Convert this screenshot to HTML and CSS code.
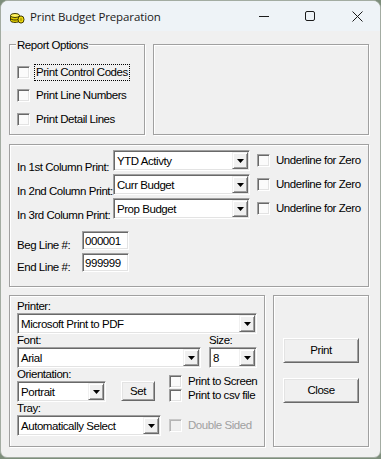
FILE: index.html
```html
<!DOCTYPE html>
<html>
<head>
<meta charset="utf-8">
<link rel="stylesheet" href="styles.css">
</head>
<body>
<div class="window">
  <div class="titlebar">
    <svg class="appicon" width="16" height="14" viewBox="0 0 16 14">
      <path d="M1.5 4.5 v5 c0 2.6 9 2.6 9 0 v-5" fill="#e2cf00" stroke="#3f3a00"/>
      <path d="M1.5 7.2 c0 2.4 9 2.4 9 0" fill="none" stroke="#3f3a00"/>
      <ellipse cx="6" cy="4.5" rx="4.5" ry="2" fill="#fff35c" stroke="#3f3a00"/>
      <ellipse cx="12" cy="8.5" rx="3" ry="3.6" fill="#f0dc10" stroke="#3f3a00"/>
      <ellipse cx="12" cy="8.5" rx="1.2" ry="1.8" fill="#b9a800"/>
    </svg>
    <span class="title">Print Budget Preparation</span>
    <div class="wctrls">
      <div class="wbtn"><span class="wmin"></span></div>
      <div class="wbtn"><span class="wmax"></span></div>
      <div class="wbtn">
        <svg width="11" height="11" viewBox="0 0 11 11"><path d="M0.5 0.5 L10.5 10.5 M10.5 0.5 L0.5 10.5" stroke="#1b1b1b" stroke-width="1"/></svg>
      </div>
    </div>
  </div>

  <div class="client">
    <div class="toprow">
      <div class="group g1">
        <div class="legend">Report Options</div>
        <div class="cbrow r1"><span class="cb"></span><span class="cbl focus">Print Control Codes</span></div>
        <div class="cbrow r2"><span class="cb"></span><span class="cbl">Print Line Numbers</span></div>
        <div class="cbrow r3"><span class="cb"></span><span class="cbl">Print Detail Lines</span></div>
      </div>
      <div class="group g2"></div>
    </div>

    <div class="group g3">
      <div class="colrow">
        <div class="rlbl">In 1st Column Print:</div>
        <div class="combo w-col"><span class="ctext">YTD Activty</span><span class="ddb"><svg width="7" height="4" viewBox="0 0 7 4"><path d="M0 0 H7 L3.5 4 Z" fill="#000"/></svg></span></div>
        <div class="uz"><span class="cb"></span><span class="uzl">Underline for Zero</span></div>
      </div>
      <div class="colrow">
        <div class="rlbl">In 2nd Column Print:</div>
        <div class="combo w-col"><span class="ctext">Curr Budget</span><span class="ddb"><svg width="7" height="4" viewBox="0 0 7 4"><path d="M0 0 H7 L3.5 4 Z" fill="#000"/></svg></span></div>
        <div class="uz"><span class="cb"></span><span class="uzl">Underline for Zero</span></div>
      </div>
      <div class="colrow">
        <div class="rlbl">In 3rd Column Print:</div>
        <div class="combo w-col"><span class="ctext">Prop Budget</span><span class="ddb"><svg width="7" height="4" viewBox="0 0 7 4"><path d="M0 0 H7 L3.5 4 Z" fill="#000"/></svg></span></div>
        <div class="uz"><span class="cb"></span><span class="uzl">Underline for Zero</span></div>
      </div>
      <div class="linerow first">
        <div class="llbl">Beg Line #:</div>
        <div class="inp">000001</div>
      </div>
      <div class="linerow">
        <div class="llbl">End Line #:</div>
        <div class="inp">999999</div>
      </div>
    </div>

    <div class="botrow">
      <div class="group g4">
        <div class="lbl">Printer:</div>
        <div class="combo w-printer"><span class="ctext">Microsoft Print to PDF</span><span class="ddb"><svg width="7" height="4" viewBox="0 0 7 4"><path d="M0 0 H7 L3.5 4 Z" fill="#000"/></svg></span></div>
        <div class="frow">
          <div class="fcol">
            <div class="lbl">Font:</div>
            <div class="combo w-font"><span class="ctext">Arial</span><span class="ddb"><svg width="7" height="4" viewBox="0 0 7 4"><path d="M0 0 H7 L3.5 4 Z" fill="#000"/></svg></span></div>
          </div>
          <div class="fcol">
            <div class="lbl">Size:</div>
            <div class="combo w-size"><span class="ctext">8</span><span class="ddb"><svg width="7" height="4" viewBox="0 0 7 4"><path d="M0 0 H7 L3.5 4 Z" fill="#000"/></svg></span></div>
          </div>
        </div>
        <div class="orow">
          <div class="fcol">
            <div class="lbl">Orientation:</div>
            <div class="combo w-orient"><span class="ctext">Portrait</span><span class="ddb"><svg width="7" height="4" viewBox="0 0 7 4"><path d="M0 0 H7 L3.5 4 Z" fill="#000"/></svg></span></div>
          </div>
          <div class="btn set">Set</div>
          <div class="checks">
            <div class="pcb"><span class="cb"></span><span class="pcl">Print to Screen</span></div>
            <div class="pcb"><span class="cb"></span><span class="pcl">Print to csv file</span></div>
          </div>
        </div>
        <div class="trow">
          <div class="fcol">
            <div class="lbl">Tray:</div>
            <div class="combo w-tray"><span class="ctext">Automatically Select</span><span class="ddb"><svg width="7" height="4" viewBox="0 0 7 4"><path d="M0 0 H7 L3.5 4 Z" fill="#000"/></svg></span></div>
          </div>
          <div class="pcb dis"><span class="cb"></span><span class="pcl">Double Sided</span></div>
        </div>
      </div>
      <div class="group g5">
        <div class="btn big">Print</div>
        <div class="btn big">Close</div>
      </div>
    </div>
  </div>
</div>
</body>
</html>
```

FILE: styles.css
```css
* { box-sizing: border-box; }
html, body { margin: 0; padding: 0; }
body {
  width: 381px;
  height: 459px;
  overflow: hidden;
  background: #7d8e7b;
  font-family: "Liberation Sans", Arial, sans-serif;
  font-size: 11.5px;
  letter-spacing: -0.45px;
  color: #000;
}
.window {
  width: 381px;
  height: 458px;
  background: #f0f0f0;
  border: 1px solid #a3aca2;
  border-radius: 8px 8px 7px 7px;
  overflow: hidden;
  display: flex;
  flex-direction: column;
}
.titlebar {
  flex: none;
  height: 30px;
  background: #eef3f7;
  display: flex;
  align-items: center;
}
.appicon { margin-left: 8px; margin-top: 3px; flex: none; }
.title {
  margin-left: 5px;
  font-family: "Open Sans", "Noto Sans", sans-serif;
  font-size: 11.5px;
  letter-spacing: -0.12px;
  color: #1b1b1b;
  margin-top: 1px;
}
.wctrls { margin-left: auto; display: flex; height: 30px; }
.wbtn {
  width: 46px;
  height: 30px;
  display: flex;
  align-items: center;
  justify-content: center;
}
.wmin { width: 10px; height: 1px; background: #1b1b1b; margin-left: -2px; }
.wmax { width: 10px; height: 10px; border: 1px solid #1b1b1b; border-radius: 2px; margin-left: -2px; }

.client {
  flex: 1;
  padding: 13px 11px 0 8px;
  display: flex;
  flex-direction: column;
}
.group {
  border: 1px solid #a0a0a0;
  box-shadow: inset 1px 1px 0 #fff, 1px 1px 0 #fff;
}
.toprow { display: flex; gap: 8px; height: 91px; flex: none; }
.g1 { width: 136px; padding-left: 7px; }
.g2 { flex: 1; }
.legend {
  width: fit-content;
  margin-top: -6px;
  margin-left: -1px;
  padding: 0 1px;
  line-height: 13px;
  background: #f0f0f0;
}

.cb {
  flex: none;
  width: 13px;
  height: 13px;
  border: 1px solid;
  border-color: #a0a0a0 #fff #fff #a0a0a0;
  box-shadow: inset 1px 1px 0 #696969, inset -1px -1px 0 #e3e3e3;
  background: #fbfbfb;
}
.cbrow { display: flex; align-items: center; height: 13px; }
.cbrow.r1 { margin-top: 14px; }
.cbrow.r2 { margin-top: 10px; }
.cbrow.r3 { margin-top: 11px; }
.cbl {
  margin-left: 4px;
  padding: 1px 1px 1px 1px;
  line-height: 13px;
  border: 1px solid transparent;
}
.cbl.focus { border: 1px dotted #000; }

.g3 { margin-top: 9px; height: 143px; flex: none; padding: 5px 0 0 7px; }
.colrow { display: flex; height: 24px; }
.rlbl { width: 96px; padding-top: 11px; line-height: 13px; white-space: nowrap; }
.combo {
  flex: none;
  display: flex;
  height: 21px;
  border: 1px solid;
  border-color: #a0a0a0 #fff #fff #a0a0a0;
  box-shadow: inset 1px 1px 0 #696969, inset -1px -1px 0 #e3e3e3;
  background: #fff;
  padding: 1px;
}
.ctext { flex: 1; padding: 1px 0 0 2px; line-height: 16px; white-space: nowrap; overflow: hidden; }
.ddb {
  flex: none;
  width: 16px;
  height: 17px;
  background: #f0f0f0;
  border: 1px solid;
  border-color: #f0f0f0 #696969 #696969 #f0f0f0;
  box-shadow: inset 1px 1px 0 #fff, inset -1px -1px 0 #a0a0a0;
  display: flex;
  align-items: center;
  justify-content: center;
  padding-top: 1px;
}
.w-col { width: 137px; }
.uz { display: flex; align-items: center; height: 21px; margin-left: 7px; }
.uzl { margin-left: 6px; line-height: 13px; white-space: nowrap; }

.linerow { display: flex; height: 22px; }
.linerow.first { margin-top: 9px; }
.llbl { width: 65px; padding-top: 8px; line-height: 13px; white-space: nowrap; }
.inp {
  width: 47px;
  height: 19px;
  border: 1px solid;
  border-color: #a0a0a0 #fff #fff #a0a0a0;
  box-shadow: inset 1px 1px 0 #696969, inset -1px -1px 0 #e3e3e3;
  background: #fff;
  padding: 1px 0 0 2px;
  line-height: 16px;
}

.botrow { display: flex; gap: 8px; margin-top: 8px; height: 152px; flex: none; }
.g4 { width: 256px; padding: 4px 0 0 7px; }
.g5 { width: 96px; padding: 42px 0 0 9px; }
.lbl { line-height: 13px; height: 13px; white-space: nowrap; }
.w-printer { width: 240px; }
.frow { display: flex; gap: 8px; }
.fcol { display: flex; flex-direction: column; }
.w-font { width: 184px; }
.w-size { width: 48px; }
.orow { display: flex; align-items: flex-end; }
.w-orient { width: 89px; }
.btn {
  flex: none;
  display: flex;
  align-items: center;
  justify-content: center;
  background: #f0f0f0;
  border: 1px solid;
  border-color: #fff #696969 #696969 #fff;
  box-shadow: inset 1px 1px 0 #e3e3e3, inset -1px -1px 0 #a0a0a0;
  line-height: 13px;
}
.btn.set { width: 34px; height: 20px; margin-left: 15px; margin-bottom: 1px; }
.checks { display: flex; flex-direction: column; gap: 1px; margin-left: 14px; }
.pcb { display: flex; align-items: center; height: 13px; }
.pcl { margin-left: 6px; line-height: 13px; white-space: nowrap; }
.trow { display: flex; align-items: flex-end; }
.w-tray { width: 144px; }
.pcb.dis { margin-left: 8px; margin-bottom: 4px; }
.pcb.dis .cb { border-color: #c8c8c8 #fff #fff #c8c8c8; box-shadow: inset 1px 1px 0 #b4b4b4, inset -1px -1px 0 #ececec; background: #f0f0f0; }
.pcb.dis .pcl { color: #a0a0a0; }
.btn.big { width: 76px; height: 25px; }
.btn.big + .btn.big { margin-top: 15px; }
```
